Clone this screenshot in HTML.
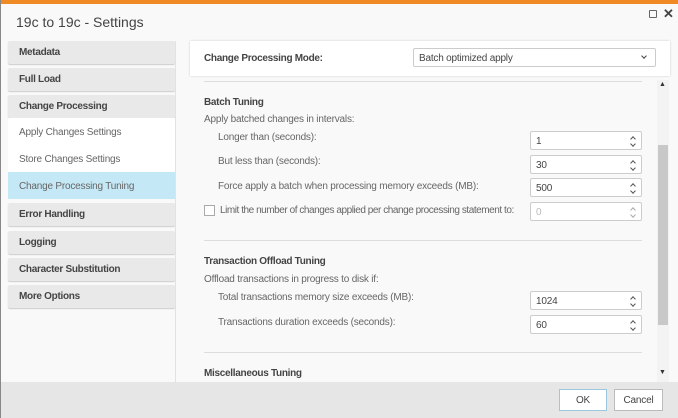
<!DOCTYPE html>
<html><head><style>
*{box-sizing:border-box;margin:0;padding:0}
body{width:678px;height:418px;overflow:hidden;background:#f9f9f9;font-family:"Liberation Sans",sans-serif;font-size:10px;color:#555;position:relative;letter-spacing:-0.2px}
.a{position:absolute}
.top{left:0;top:0;width:678px;height:4px;background:#f08a24}
.lb{left:0;top:0;width:1px;height:418px;background:#888}
.title{left:16px;top:14px;font-size:14px;color:#444;letter-spacing:0}
.nav{left:8px;width:167px;height:23px;background:#e9e9e9;border-radius:2px;box-shadow:0 1px 1px #ccc;font-weight:bold;color:#444;padding:6px 0 0 11px;letter-spacing:-0.3px}
.sub{left:8px;width:167px;height:27px;background:#fff;color:#666;padding:9px 0 0 11px}
.sel{background:#c5e8f6}
.vr{left:175px;top:41px;width:1px;height:341px;background:#e2e2e2}
.card{left:190px;top:41px;width:480px;height:35px;background:#fff;box-shadow:0 0 2px #ccc}
.hr{left:204px;width:438px;height:1px;background:#ddd}
.h{left:204px;font-weight:bold;color:#444;letter-spacing:-0.3px}
.l1{left:204px;color:#666}
.l2{left:218px;color:#666}
.inp{left:530px;width:112px;height:19px;background:#fff;border:1px solid #ccc;border-radius:2px;padding:4px 0 0 5px;color:#444}
.inp i{position:absolute;right:6px;width:4px;height:4px;border-left:1px solid #555;border-top:1px solid #555}
.inp i.u{top:5px;transform:rotate(45deg)}
.inp i.d{top:10px;transform:rotate(225deg)}
.dis{color:#bbb}
.btn{top:389px;height:22px;background:#fff;border:1px solid #bbb;text-align:center;padding-top:5px;color:#444}
</style></head><body>
<div class="a top"></div><div class="a lb"></div>
<div class="a title">19c to 19c - Settings</div>
<div class="a" style="left:649px;top:10px;width:8px;height:8px;border:1px solid #666;border-radius:1px"></div>
<div class="a" style="left:663px;top:6px;font-size:13px;font-weight:bold;color:#444">✕</div>
<div class="a nav" style="top:41px">Metadata</div>
<div class="a nav" style="top:68px">Full Load</div>
<div class="a nav" style="top:95px">Change Processing</div>
<div class="a sub" style="top:118px">Apply Changes Settings</div>
<div class="a sub" style="top:145px">Store Changes Settings</div>
<div class="a sub sel" style="top:172px">Change Processing Tuning</div>
<div class="a nav" style="top:203px">Error Handling</div>
<div class="a nav" style="top:231px">Logging</div>
<div class="a nav" style="top:258px">Character Substitution</div>
<div class="a nav" style="top:285px">More Options</div>
<div class="a vr"></div>
<div class="a card"></div>
<div class="a h" style="top:53px">Change Processing Mode:</div>
<div class="a" style="left:413px;top:48px;width:243px;height:19px;background:#fff;border:1px solid #ccc;border-radius:2px;padding:4px 0 0 5px;color:#444">Batch optimized apply<i style="position:absolute;right:9px;top:5px;width:4px;height:4px;border-right:1px solid #444;border-bottom:1px solid #444;transform:rotate(45deg)"></i></div>
<div class="a hr" style="top:81px"></div>
<div class="a" style="left:657px;top:80px;width:12px;height:302px;background:#f3f3f3"></div>
<div class="a" style="left:658px;top:145px;width:10px;height:180px;background:#c8c8c8"></div>
<div class="a" style="left:659px;top:81px;font-size:7px;color:#333">▲</div>
<div class="a" style="left:659px;top:369px;font-size:7px;color:#333">▼</div>
<div class="a h" style="top:97px">Batch Tuning</div>
<div class="a l1" style="top:114px">Apply batched changes in intervals:</div>
<div class="a l2" style="top:132px">Longer than (seconds):</div>
<div class="a inp" style="top:131px">1<i class="u"></i><i class="d"></i></div>
<div class="a l2" style="top:156px">But less than (seconds):</div>
<div class="a inp" style="top:155px">30<i class="u"></i><i class="d"></i></div>
<div class="a l2" style="top:181px">Force apply a batch when processing memory exceeds (MB):</div>
<div class="a inp" style="top:178px">500<i class="u"></i><i class="d"></i></div>
<div class="a" style="left:204px;top:205px;width:11px;height:11px;border:1px solid #aaa;background:#fff"></div>
<div class="a l2" style="left:220px;top:205px;letter-spacing:-0.45px">Limit the number of changes applied per change processing statement to:</div>
<div class="a inp dis" style="top:202px">0<i class="u" style="border-color:#aaa"></i><i class="d" style="border-color:#aaa"></i></div>
<div class="a hr" style="top:240px"></div>
<div class="a h" style="top:256px">Transaction Offload Tuning</div>
<div class="a l1" style="top:274px">Offload transactions in progress to disk if:</div>
<div class="a l2" style="top:292px">Total transactions memory size exceeds (MB):</div>
<div class="a inp" style="top:291px">1024<i class="u"></i><i class="d"></i></div>
<div class="a l2" style="top:317px">Transactions duration exceeds (seconds):</div>
<div class="a inp" style="top:315px">60<i class="u"></i><i class="d"></i></div>
<div class="a hr" style="top:352px"></div>
<div class="a h" style="top:368px">Miscellaneous Tuning</div>
<div class="a" style="left:1px;top:382px;width:677px;height:36px;background:#e6e6e6"></div>
<div class="a btn" style="left:559px;width:48px;border-color:#9cc7e0">OK</div>
<div class="a btn" style="left:614px;width:49px">Cancel</div>
</body></html>
